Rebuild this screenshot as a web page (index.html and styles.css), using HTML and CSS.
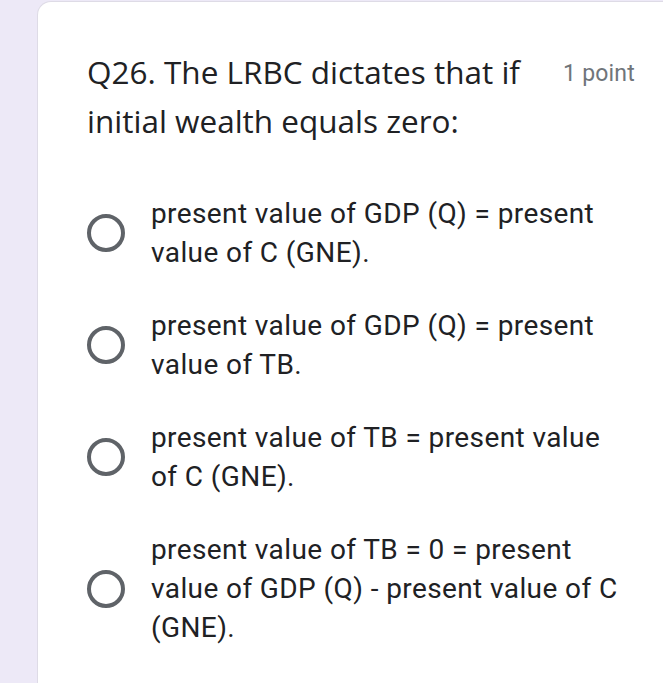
FILE: index.html
```html
<!DOCTYPE html>
<html lang="en">
<head>
<meta charset="utf-8">
<title>Question</title>
<link rel="stylesheet" href="styles.css">
</head>
<body>
<div class="card">
  <div class="header">
    <div class="title">Q26. The LRBC dictates that if initial wealth equals zero:</div>
    <div class="points">1 point</div>
  </div>
  <div class="options">
    <div class="option">
      <span class="radio"></span>
      <div class="label">present value of GDP (Q) = present value of C (GNE).</div>
    </div>
    <div class="option">
      <span class="radio"></span>
      <div class="label">present value of GDP (Q) = present value of TB.</div>
    </div>
    <div class="option">
      <span class="radio"></span>
      <div class="label">present value of TB = present value of C (GNE).</div>
    </div>
    <div class="option">
      <span class="radio"></span>
      <div class="label">present value of TB = 0 = present value of GDP (Q) - present value of C (GNE).</div>
    </div>
  </div>
</div>
</body>
</html>
```

FILE: styles.css
```css
html, body {
  margin: 0;
  padding: 0;
  background: #ede9f7;
  overflow: hidden;
}
.card {
  margin: 1px 0 0 37px;
  background: #ffffff;
  border: 1px solid #dedbe6;
  border-right: none;
  border-radius: 14px 0 0 0;
  min-height: 700px;
  padding: 45px 28px 0 49px;
  box-sizing: border-box;
}
.header {
  display: flex;
  align-items: flex-start;
  gap: 36px;
}
.title {
  flex: 1;
  font-family: "Open Sans", sans-serif;
  font-size: 31.5px;
  line-height: 49px;
  color: #202124;
}
.points {
  font-family: Roboto, sans-serif;
  font-size: 23px;
  line-height: 49px;
  padding-top: 2px;
  letter-spacing: 0.2px;
  color: #70757a;
  white-space: nowrap;
}
.options {
  display: flex;
  flex-direction: column;
  gap: 34px;
  margin-top: 49px;
}
.option {
  display: flex;
  align-items: center;
  gap: 26px;
}
.radio {
  flex: none;
  width: 38px;
  height: 38px;
  box-sizing: border-box;
  border: 4px solid #5f6368;
  border-radius: 50%;
}
.label {
  font-family: Roboto, sans-serif;
  font-size: 28px;
  line-height: 39px;
  letter-spacing: 0.4px;
  color: #202124;
  max-width: 470px;
}
```
